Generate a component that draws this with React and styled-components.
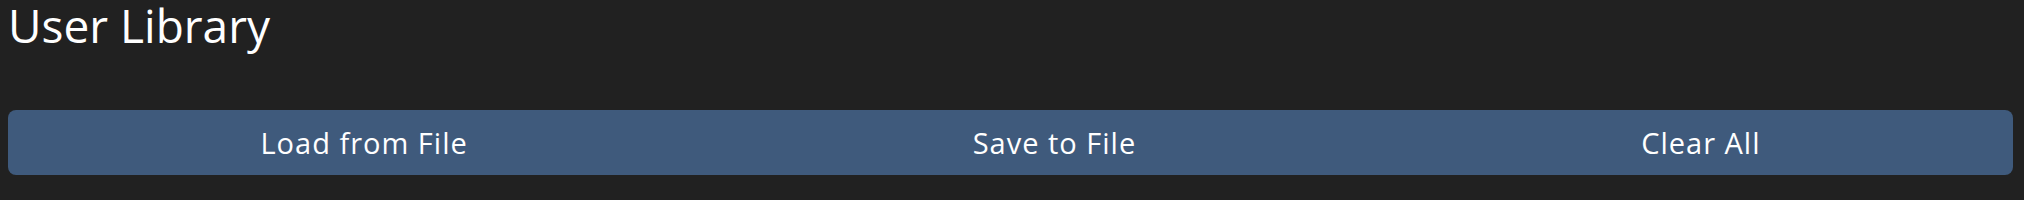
import React from "react";
import styled, { createGlobalStyle } from "styled-components";

const GlobalStyle = createGlobalStyle`
  html, body {
    margin: 0;
    background-color: #212121;
  }
  body {
    font-family: "Open Sans", "Noto Sans", sans-serif;
    color: #ffffff;
  }
`;

const Container = styled.div`
  display: flex;
  flex-direction: column;
  padding: 0 11px 0 8px;
`;

const Title = styled.h1`
  margin: 0 0 59px;
  font-size: 46px;
  font-weight: 400;
  line-height: 51px;
  color: #ffffff;
`;

const Toolbar = styled.div`
  display: flex;
  justify-content: space-around;
  align-items: center;
  height: 65px;
  border-radius: 8px;
  background-color: #3f5a7c;
`;

const Button = styled.button`
  padding: 0;
  border: none;
  background: none;
  font-family: inherit;
  font-size: 29px;
  letter-spacing: 1px;
  color: #ffffff;
  cursor: pointer;
`;

const actions = ["Load from File", "Save to File", "Clear All"];

const App = () => (
  <>
    <GlobalStyle />
    <Container>
      <Title>User Library</Title>
      <Toolbar>
        {actions.map((label) => (
          <Button key={label}>{label}</Button>
        ))}
      </Toolbar>
    </Container>
  </>
);

export default App;
